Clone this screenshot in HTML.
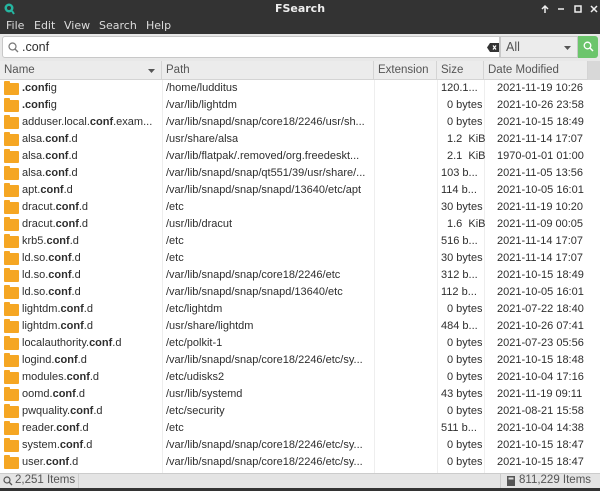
<!DOCTYPE html>
<html><head><meta charset="utf-8"><style>
*{margin:0;padding:0;box-sizing:border-box}
body{width:600px;height:491px;overflow:hidden;background:#333;font-family:"Liberation Sans","DejaVu Sans",sans-serif;font-size:11px;color:#2e2e2e;position:relative}
.title{position:absolute;left:0;top:0;width:600px;height:18px;background:#333;color:#eee;font-family:"DejaVu Sans",sans-serif}
.title .t{position:absolute;left:0;width:600px;text-align:center;top:2px;font-weight:bold;font-size:11px}
.menu{position:absolute;top:19px;left:0;height:16px;color:#ddd;font-size:11px;font-family:"DejaVu Sans",sans-serif}
.menu span{position:absolute;top:0}
.tb{position:absolute;top:34px;left:0;width:600px;height:27px;background:#e8e8e8}
.entry{position:absolute;left:2px;top:2px;width:498px;height:22px;background:#fff;border:1px solid #c8c8c8;border-radius:3px 0 0 3px}
.combo{position:absolute;left:500px;top:2px;width:78px;height:22px;background:#ececec;border:1px solid #c8c8c8}
.go{position:absolute;left:578px;top:2px;width:20px;height:22px;background:#6cc56c;border-radius:0 3px 3px 0}
.hdr{position:absolute;top:61px;left:0;width:600px;height:19px;background:#ececec;border-bottom:1px solid #d4d4d4;color:#555;font-size:11.5px}
.hdr div{position:absolute;top:0;height:19px;line-height:19px;padding-left:4px;border-right:1px solid #d4d4d4}
.list{position:absolute;top:80px;left:0;width:600px;height:393px;background:#fff}
.row{position:absolute;left:0;width:600px;height:17px;line-height:17px}
.row span{position:absolute;top:0;white-space:nowrap;overflow:hidden}
.ic{position:absolute;left:4px;top:3px;width:15px;height:12px;background:#f5a623;border-radius:1px}
.ic:before{content:"";position:absolute;left:0;top:-2px;width:6px;height:3px;background:#f5a623;border-radius:1px 1px 0 0}
.sep{position:absolute;top:80px;height:393px;width:1px;background:#eee}
.status{position:absolute;top:473px;left:0;width:600px;height:15px;background:#e4e4e4;border-top:1px solid #ccc;color:#555;font-size:11.5px}
</style></head><body>
<div class="title"><svg style="position:absolute;left:3px;top:2px" width="12" height="13"><circle cx="6" cy="6" r="4.5" fill="#25b5a0"/><circle cx="6" cy="6" r="2" fill="#333"/><path d="M9 9 L11 12" stroke="#25b5a0" stroke-width="2"/></svg><div class="t">FSearch</div>
<svg style="position:absolute;left:540px;top:4px" width="58" height="10"><path d="M5 9V2M2 5L5 2L8 5" stroke="#eee" stroke-width="1.5" fill="none"/><path d="M18 5H24" stroke="#eee" stroke-width="1.5"/><rect x="35" y="2" width="6" height="6" stroke="#eee" stroke-width="1.5" fill="none"/><path d="M51 2L57 8M57 2L51 8" stroke="#eee" stroke-width="1.5"/></svg></div>
<div class="menu"><span style="left:6px">File</span><span style="left:34px">Edit</span><span style="left:64px">View</span><span style="left:99px">Search</span><span style="left:146px">Help</span></div>
<div class="tb">
<div class="entry"><svg style="position:absolute;left:5px;top:5px" width="11" height="11"><circle cx="4.5" cy="4.5" r="3.5" stroke="#777" stroke-width="1.2" fill="none"/><path d="M7 7L10 10" stroke="#777" stroke-width="1.3"/></svg><span style="position:absolute;left:19px;top:3px;font-size:12.5px">.conf</span>
<svg style="position:absolute;top:6px;left:484px" width="12" height="9"><path d="M0 4.5L3 0H12V9H3Z" fill="#333"/><path d="M6 2.5L9 6.5M9 2.5L6 6.5" stroke="#fff" stroke-width="1.2"/></svg></div>
<div class="combo"><span style="position:absolute;left:5px;top:3px;color:#555;font-size:12.5px">All</span><svg style="position:absolute;left:63px;top:9px" width="7" height="4"><path d="M0 0H7L3.5 4Z" fill="#555"/></svg></div>
<div class="go"><svg style="position:absolute;left:5px;top:5px" width="11" height="11"><circle cx="4.5" cy="4.5" r="3.3" stroke="#fff" stroke-width="1.3" fill="none"/><path d="M7 7L10 10" stroke="#fff" stroke-width="1.5"/></svg></div>
</div>
<div class="hdr"><div style="left:0;width:162px">Name<svg style="position:absolute;left:148px;top:8px" width="7" height="4"><path d="M0 0H7L3.5 4Z" fill="#555"/></svg></div><div style="left:162px;width:212px">Path</div><div style="left:374px;width:63px">Extension</div><div style="left:437px;width:47px">Size</div><div style="left:484px;width:104px">Date Modified</div><div style="left:588px;width:12px;background:#d8d8d8;border:none"></div></div>
<div class="list" id="l"></div>
<div class="sep" style="left:162px"></div><div class="sep" style="left:374px"></div><div class="sep" style="left:437px"></div><div class="sep" style="left:484px"></div>
<div class="status"><svg style="position:absolute;left:3px;top:2px" width="10" height="10"><circle cx="4" cy="4" r="3" stroke="#555" stroke-width="1.2" fill="none"/><path d="M6 6L9 9" stroke="#555" stroke-width="1.3"/></svg><span style="position:absolute;left:15px;top:0">2,251 Items</span><div style="position:absolute;left:78px;top:0;width:1px;height:14px;background:#ccc"></div><div style="position:absolute;left:500px;top:0;width:1px;height:14px;background:#ccc"></div><svg style="position:absolute;left:507px;top:2px" width="8" height="10"><rect x="0" y="0" width="8" height="10" fill="#555"/><rect x="1.5" y="1.5" width="5" height="2" fill="#ddd"/></svg><span style="position:absolute;left:519px;top:0">811,229 Items</span></div>
<div class="list" style="background:none">
<div class="row" style="top:0"><i class="ic"></i><span style="left:22px"><b>.conf</b>ig</span><span style="left:166px">/home/ludditus</span><span style="left:441px">120.1...</span><span style="left:497px">2021-11-19 10:26</span></div>
<div class="row" style="top:17px"><i class="ic"></i><span style="left:22px"><b>.conf</b>ig</span><span style="left:166px">/var/lib/lightdm</span><span style="left:447px">0 bytes</span><span style="left:497px">2021-10-26 23:58</span></div>
<div class="row" style="top:34px"><i class="ic"></i><span style="left:22px">adduser.local.<b>conf</b>.exam...</span><span style="left:166px">/var/lib/snapd/snap/core18/2246/usr/sh...</span><span style="left:447px">0 bytes</span><span style="left:497px">2021-10-15 18:49</span></div>
<div class="row" style="top:51px"><i class="ic"></i><span style="left:22px">alsa.<b>conf</b>.d</span><span style="left:166px">/usr/share/alsa</span><span style="left:447px">1.2&nbsp; KiB</span><span style="left:497px">2021-11-14 17:07</span></div>
<div class="row" style="top:68px"><i class="ic"></i><span style="left:22px">alsa.<b>conf</b>.d</span><span style="left:166px">/var/lib/flatpak/.removed/org.freedeskt...</span><span style="left:447px">2.1&nbsp; KiB</span><span style="left:497px">1970-01-01 01:00</span></div>
<div class="row" style="top:85px"><i class="ic"></i><span style="left:22px">alsa.<b>conf</b>.d</span><span style="left:166px">/var/lib/snapd/snap/qt551/39/usr/share/...</span><span style="left:441px">103 b...</span><span style="left:497px">2021-11-05 13:56</span></div>
<div class="row" style="top:102px"><i class="ic"></i><span style="left:22px">apt.<b>conf</b>.d</span><span style="left:166px">/var/lib/snapd/snap/snapd/13640/etc/apt</span><span style="left:441px">114 b...</span><span style="left:497px">2021-10-05 16:01</span></div>
<div class="row" style="top:119px"><i class="ic"></i><span style="left:22px">dracut.<b>conf</b>.d</span><span style="left:166px">/etc</span><span style="left:441px">30 bytes</span><span style="left:497px">2021-11-19 10:20</span></div>
<div class="row" style="top:136px"><i class="ic"></i><span style="left:22px">dracut.<b>conf</b>.d</span><span style="left:166px">/usr/lib/dracut</span><span style="left:447px">1.6&nbsp; KiB</span><span style="left:497px">2021-11-09 00:05</span></div>
<div class="row" style="top:153px"><i class="ic"></i><span style="left:22px">krb5.<b>conf</b>.d</span><span style="left:166px">/etc</span><span style="left:441px">516 b...</span><span style="left:497px">2021-11-14 17:07</span></div>
<div class="row" style="top:170px"><i class="ic"></i><span style="left:22px">ld.so.<b>conf</b>.d</span><span style="left:166px">/etc</span><span style="left:441px">30 bytes</span><span style="left:497px">2021-11-14 17:07</span></div>
<div class="row" style="top:187px"><i class="ic"></i><span style="left:22px">ld.so.<b>conf</b>.d</span><span style="left:166px">/var/lib/snapd/snap/core18/2246/etc</span><span style="left:441px">312 b...</span><span style="left:497px">2021-10-15 18:49</span></div>
<div class="row" style="top:204px"><i class="ic"></i><span style="left:22px">ld.so.<b>conf</b>.d</span><span style="left:166px">/var/lib/snapd/snap/snapd/13640/etc</span><span style="left:441px">112 b...</span><span style="left:497px">2021-10-05 16:01</span></div>
<div class="row" style="top:221px"><i class="ic"></i><span style="left:22px">lightdm.<b>conf</b>.d</span><span style="left:166px">/etc/lightdm</span><span style="left:447px">0 bytes</span><span style="left:497px">2021-07-22 18:40</span></div>
<div class="row" style="top:238px"><i class="ic"></i><span style="left:22px">lightdm.<b>conf</b>.d</span><span style="left:166px">/usr/share/lightdm</span><span style="left:441px">484 b...</span><span style="left:497px">2021-10-26 07:41</span></div>
<div class="row" style="top:255px"><i class="ic"></i><span style="left:22px">localauthority.<b>conf</b>.d</span><span style="left:166px">/etc/polkit-1</span><span style="left:447px">0 bytes</span><span style="left:497px">2021-07-23 05:56</span></div>
<div class="row" style="top:272px"><i class="ic"></i><span style="left:22px">logind.<b>conf</b>.d</span><span style="left:166px">/var/lib/snapd/snap/core18/2246/etc/sy...</span><span style="left:447px">0 bytes</span><span style="left:497px">2021-10-15 18:48</span></div>
<div class="row" style="top:289px"><i class="ic"></i><span style="left:22px">modules.<b>conf</b>.d</span><span style="left:166px">/etc/udisks2</span><span style="left:447px">0 bytes</span><span style="left:497px">2021-10-04 17:16</span></div>
<div class="row" style="top:306px"><i class="ic"></i><span style="left:22px">oomd.<b>conf</b>.d</span><span style="left:166px">/usr/lib/systemd</span><span style="left:441px">43 bytes</span><span style="left:497px">2021-11-19 09:11</span></div>
<div class="row" style="top:323px"><i class="ic"></i><span style="left:22px">pwquality.<b>conf</b>.d</span><span style="left:166px">/etc/security</span><span style="left:447px">0 bytes</span><span style="left:497px">2021-08-21 15:58</span></div>
<div class="row" style="top:340px"><i class="ic"></i><span style="left:22px">reader.<b>conf</b>.d</span><span style="left:166px">/etc</span><span style="left:441px">511 b...</span><span style="left:497px">2021-10-04 14:38</span></div>
<div class="row" style="top:357px"><i class="ic"></i><span style="left:22px">system.<b>conf</b>.d</span><span style="left:166px">/var/lib/snapd/snap/core18/2246/etc/sy...</span><span style="left:447px">0 bytes</span><span style="left:497px">2021-10-15 18:47</span></div>
<div class="row" style="top:374px"><i class="ic"></i><span style="left:22px">user.<b>conf</b>.d</span><span style="left:166px">/var/lib/snapd/snap/core18/2246/etc/sy...</span><span style="left:447px">0 bytes</span><span style="left:497px">2021-10-15 18:47</span></div>
</div>
</body></html>
